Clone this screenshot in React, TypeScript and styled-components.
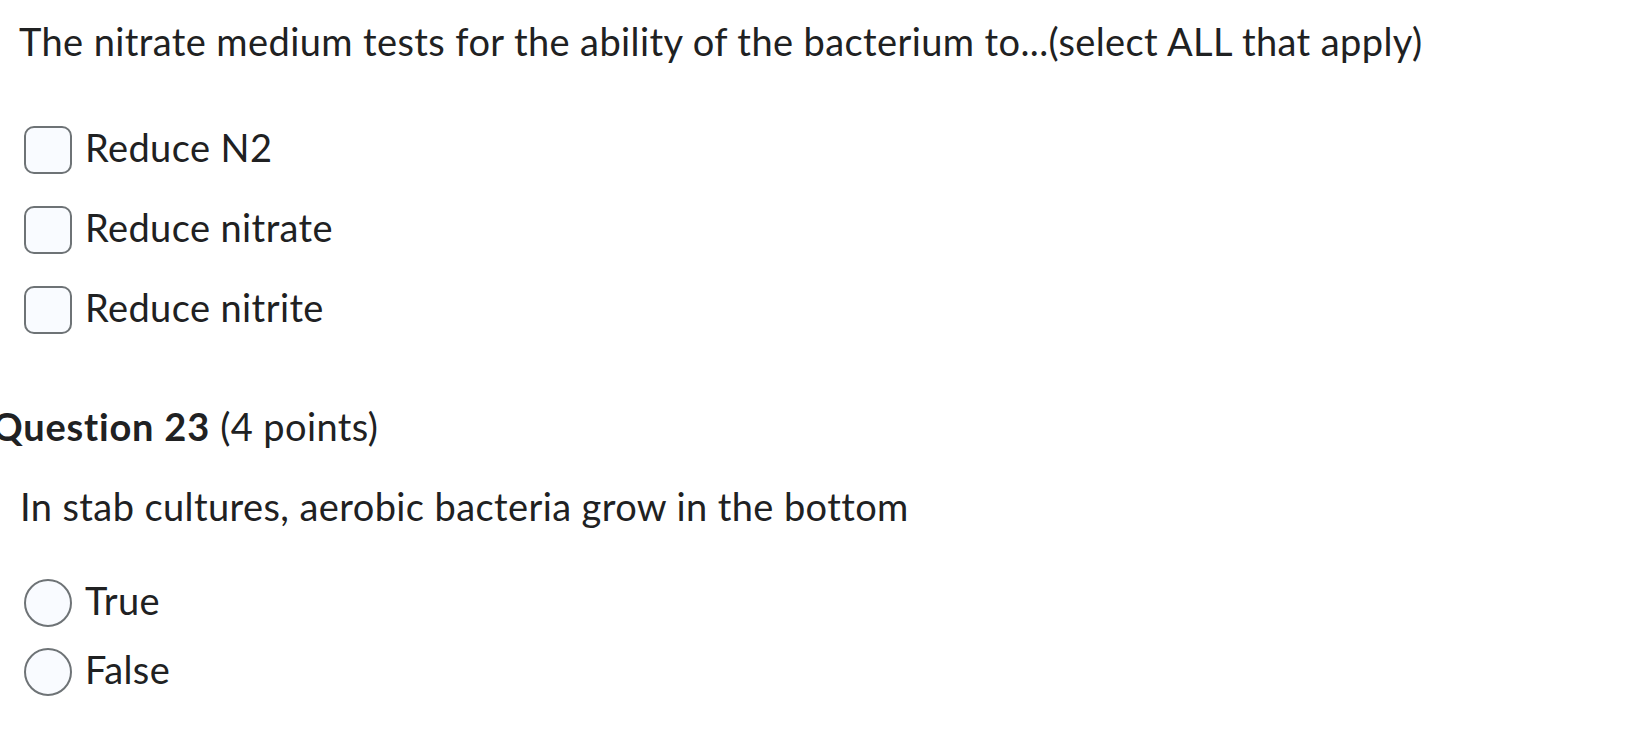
import React from "react";
import styled, { createGlobalStyle } from "styled-components";

const GlobalStyle = createGlobalStyle`
  html, body {
    margin: 0;
    padding: 0;
    background: #ffffff;
  }
  body {
    font-family: Lato, "Noto Sans", sans-serif;
    color: #202122;
    letter-spacing: 0.4px;
  }
`;

const Page = styled.div`
  padding: 15px 0 0 19px;
`;

const Prompt = styled.p`
  margin: 0;
  font-size: 38px;
  line-height: 52px;
`;

const Choices = styled.div<{ $gap: number; $top: number }>`
  display: flex;
  flex-direction: column;
  gap: ${(p) => p.$gap}px;
  margin-top: ${(p) => p.$top}px;
  padding-left: 5px;
`;

const Choice = styled.label`
  display: flex;
  align-items: center;
  gap: 13px;
  height: 48px;
  font-size: 38px;
  cursor: pointer;
`;

const ChoiceText = styled.span`
  line-height: 48px;
  margin-bottom: 6px;
`;

const Box = styled.span<{ $round?: boolean }>`
  flex: none;
  box-sizing: border-box;
  width: 48px;
  height: 48px;
  border: 2px solid #6e7376;
  border-radius: ${(p) => (p.$round ? "50%" : "10px")};
  background: #f9fbff;
`;

const Heading = styled.h2`
  margin: 66px 0 0 -27px;
  font-size: 38px;
  line-height: 52px;
  font-weight: 400;
`;

const Strong = styled.strong`
  font-weight: 700;
  letter-spacing: 0.8px;
`;

const QuestionText = styled(Prompt)`
  margin-top: 28px;
  padding-left: 1px;
`;

const checks = ["Reduce N2", "Reduce nitrate", "Reduce nitrite"];
const answers = ["True", "False"];

export default function App() {
  return (
    <>
      <GlobalStyle />
      <Page>
        <Prompt>
          The nitrate medium tests for the ability of the bacterium to...(select ALL that apply)
        </Prompt>
        <Choices $gap={32} $top={59}>
          {checks.map((c) => (
            <Choice key={c}>
              <Box />
              <ChoiceText>{c}</ChoiceText>
            </Choice>
          ))}
        </Choices>
        <Heading>
          <Strong>Question 23</Strong> (4 points)
        </Heading>
        <QuestionText>In stab cultures, aerobic bacteria grow in the bottom</QuestionText>
        <Choices $gap={21} $top={47}>
          {answers.map((a) => (
            <Choice key={a}>
              <Box $round />
              <ChoiceText>{a}</ChoiceText>
            </Choice>
          ))}
        </Choices>
      </Page>
    </>
  );
}
